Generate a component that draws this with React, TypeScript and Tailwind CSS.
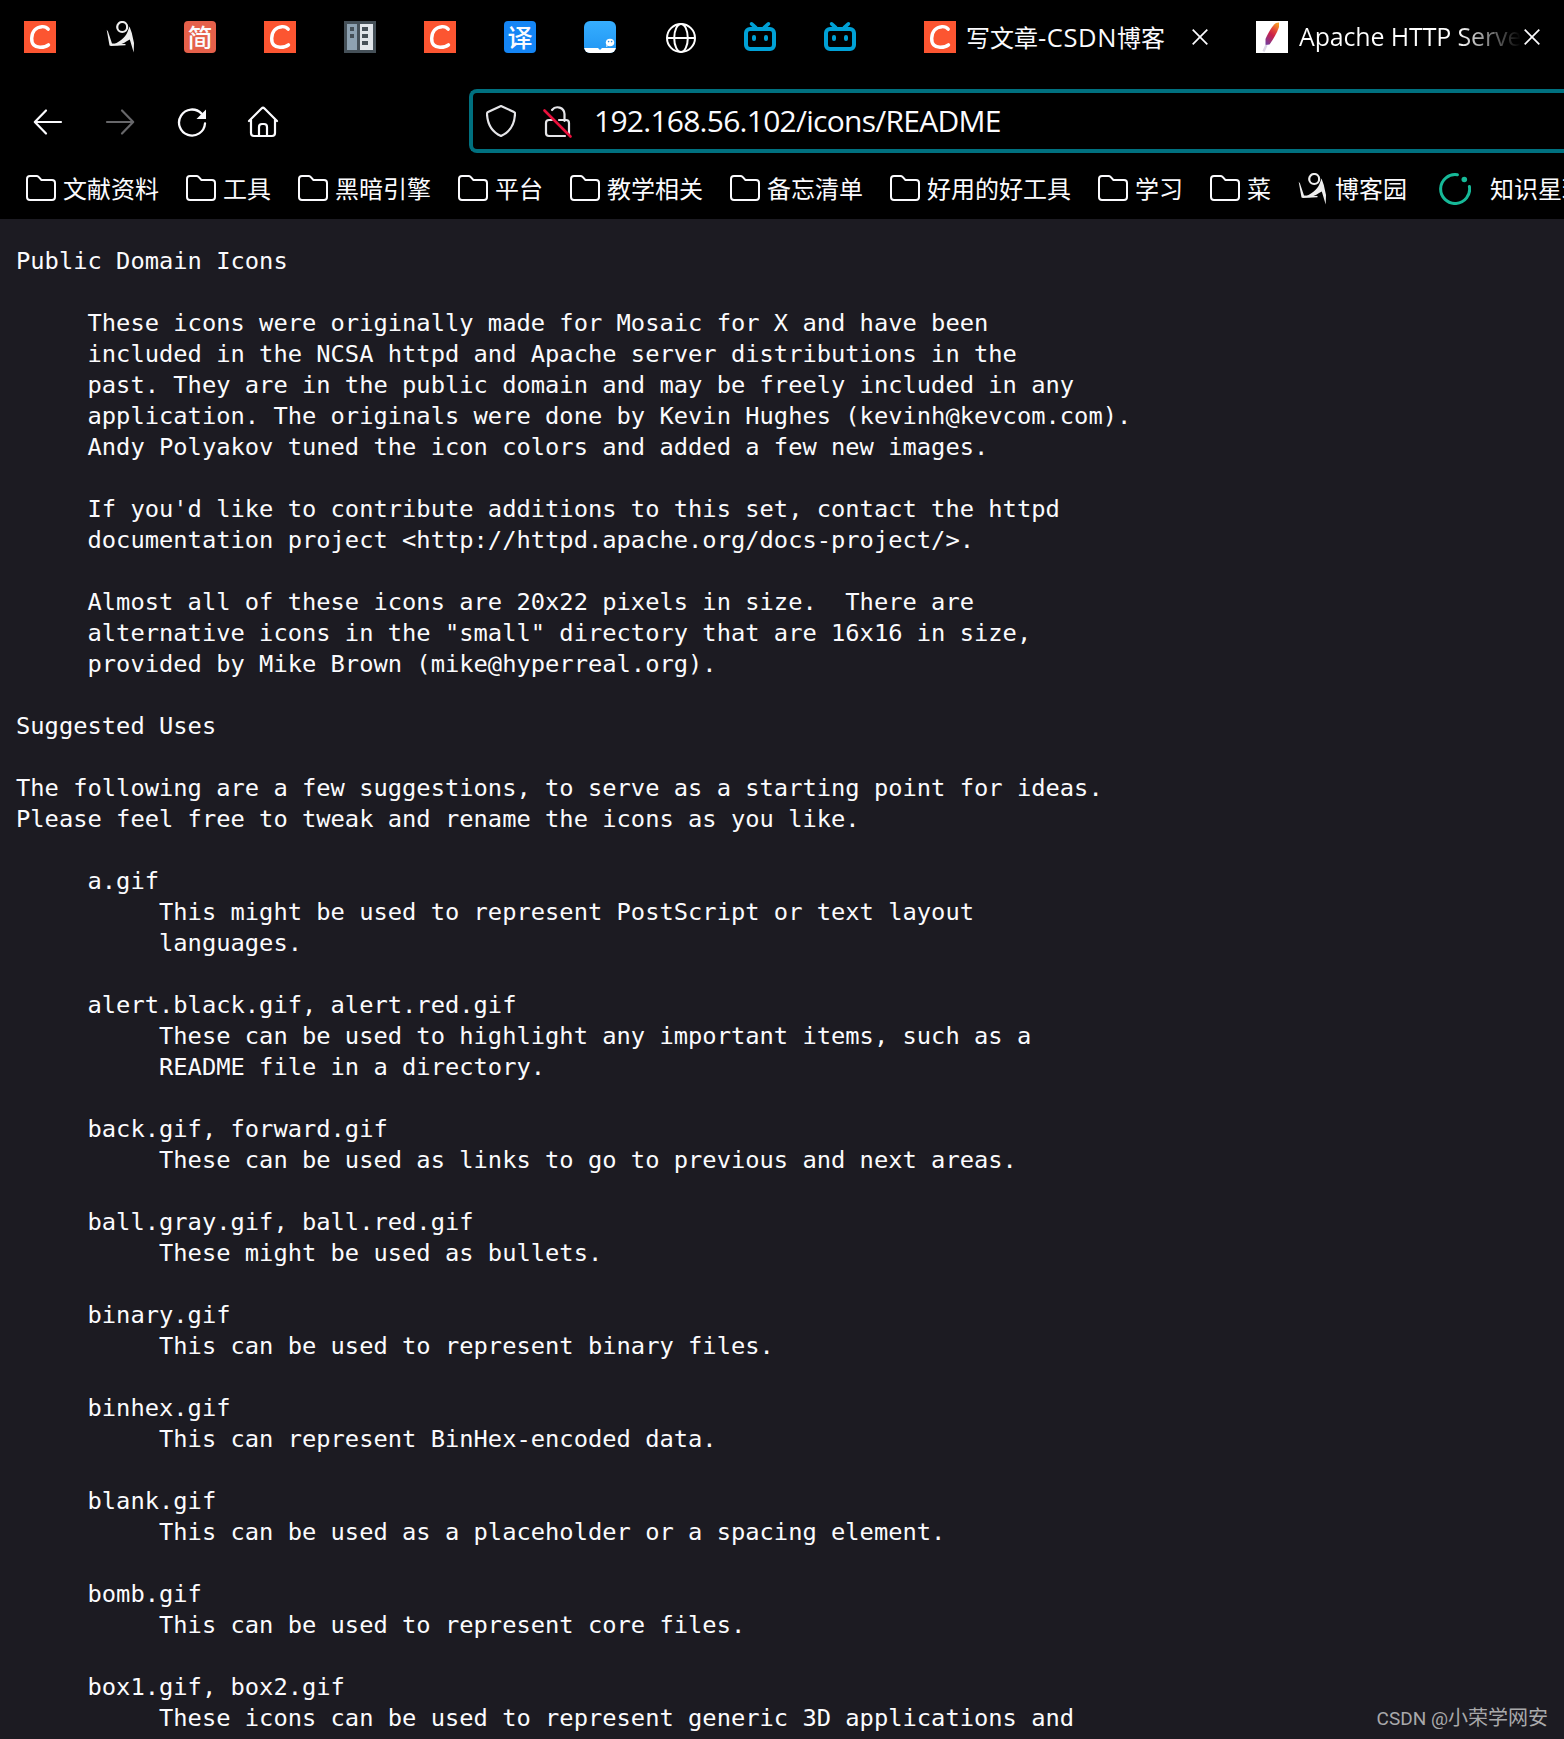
import type { ReactNode } from 'react';

const bookmarks = [
  { label: '文献资料', width: 'w-[160px]' },
  { label: '工具', width: 'w-[112px]' },
  { label: '黑暗引擎', width: 'w-[160px]' },
  { label: '平台', width: 'w-[112px]' },
  { label: '教学相关', width: 'w-[160px]' },
  { label: '备忘清单', width: 'w-[160px]' },
  { label: '好用的好工具', width: 'w-[208px]' },
  { label: '学习', width: 'w-[112px]' },
  { label: '菜', width: 'w-[88px]' },
];

const readme = `Public Domain Icons

     These icons were originally made for Mosaic for X and have been
     included in the NCSA httpd and Apache server distributions in the
     past. They are in the public domain and may be freely included in any
     application. The originals were done by Kevin Hughes (kevinh@kevcom.com).
     Andy Polyakov tuned the icon colors and added a few new images.

     If you'd like to contribute additions to this set, contact the httpd
     documentation project <http://httpd.apache.org/docs-project/>.

     Almost all of these icons are 20x22 pixels in size.  There are
     alternative icons in the "small" directory that are 16x16 in size,
     provided by Mike Brown (mike@hyperreal.org).

Suggested Uses

The following are a few suggestions, to serve as a starting point for ideas.
Please feel free to tweak and rename the icons as you like.

     a.gif
          This might be used to represent PostScript or text layout
          languages.

     alert.black.gif, alert.red.gif
          These can be used to highlight any important items, such as a
          README file in a directory.

     back.gif, forward.gif
          These can be used as links to go to previous and next areas.

     ball.gray.gif, ball.red.gif
          These might be used as bullets.

     binary.gif
          This can be used to represent binary files.

     binhex.gif
          This can represent BinHex-encoded data.

     blank.gif
          This can be used as a placeholder or a spacing element.

     bomb.gif
          This can be used to represent core files.

     box1.gif, box2.gif
          These icons can be used to represent generic 3D applications and`;

const CsdnIcon = () => (
  <svg width="32" height="32" viewBox="0 0 32 32" className="shrink-0">
    <rect width="32" height="32" fill="#fc5531" />
    <path d="M24.2 8.1C22.6 6.2 20.3 5.5 17.9 5.7C11.8 6.1 7.9 10.7 7.7 17.2C7.5 23.3 10.8 26.2 16 26.3C19.5 26.4 22.4 25.7 24.5 23.9" fill="none" stroke="#fff" strokeWidth="3.4" strokeLinecap="round" />
  </svg>
);

const CnblogsIcon = () => (
  <svg width="32" height="32" viewBox="0 0 32 32" className="shrink-0">
    <circle cx="18.2" cy="6" r="5" fill="none" stroke="#eee" strokeWidth="2.2" />
    <path d="M2.7 8.8L4 10.5L8 22.6L21.5 22.9L21.5 24.2L7 25L5.5 24.6Z" fill="#eee" />
    <path d="M25.5 5.5L27.8 12L30 22L29.7 31.5L25.8 18.5C22 20.5 19 23 14 24.2L8 24C15 21.5 21 17 23.5 11Z" fill="#eee" />
  </svg>
);

const JianIcon = () => (
  <span className="flex h-8 w-8 shrink-0 items-center justify-center rounded bg-[#e5604a] pb-px text-[25px] font-medium leading-8">简</span>
);

const BuildingIcon = () => (
  <svg width="32" height="32" viewBox="0 0 32 32" className="shrink-0">
    <rect width="32" height="32" fill="#455058" />
    <rect x="3" y="3" width="10" height="26" fill="#8ea2b2" />
    <rect x="16" y="3" width="13" height="26" fill="#e1e6eb" />
    <path d="M6 6h4v4H6zM6 13h4v4H6zM18 6h6v4h-6zM18 13h6v4h-6zM18 20h6v4h-6z" fill="#455058" />
  </svg>
);

const TranslateIcon = () => (
  <span className="flex h-8 w-8 shrink-0 items-center justify-center rounded bg-[#1485f5] pb-px text-[25px] font-medium leading-8">译</span>
);

const BlueCardIcon = () => (
  <svg width="32" height="32" viewBox="0 0 32 32" className="shrink-0">
    <defs>
      <clipPath id="card">
        <rect width="32" height="32" rx="6" />
      </clipPath>
      <linearGradient id="cardFill" x1="0" y1="0" x2="0" y2="1">
        <stop offset="0" stopColor="#36aeff" />
        <stop offset="1" stopColor="#2196f3" />
      </linearGradient>
    </defs>
    <g clipPath="url(#card)">
      <rect width="32" height="32" fill="url(#cardFill)" />
      <path d="M0 27h14l2 2 2-2h14v5H0z" fill="#fff" />
      <ellipse cx="26" cy="21.5" rx="4.2" ry="3.8" fill="#fff" />
      <circle cx="22.8" cy="25" r="0.8" fill="#fff" />
      <circle cx="24.6" cy="20.6" r="0.8" fill="#2a8fe0" />
      <circle cx="27.6" cy="20.6" r="0.8" fill="#2a8fe0" />
    </g>
  </svg>
);

const GlobeIcon = () => (
  <svg width="32" height="32" viewBox="0 0 32 32" className="shrink-0" fill="none" stroke="#fff" strokeWidth="2">
    <circle cx="17" cy="17" r="14" />
    <ellipse cx="17" cy="17" rx="6.8" ry="14" />
    <path d="M3 17h28" />
  </svg>
);

const BiliIcon = () => (
  <svg width="32" height="32" viewBox="0 0 32 32" className="shrink-0" fill="none" stroke="#00a1d6" strokeWidth="4" strokeLinecap="round">
    <rect x="2" y="8" width="28" height="20" rx="4" />
    <path d="M7.6 2.8L11.8 6.6M24.4 2.8L20.2 6.6" strokeWidth="3.6" />
    <path d="M10 16v2M22 16v2" />
  </svg>
);

const FeatherIcon = () => (
  <svg width="32" height="32" viewBox="0 0 32 32" className="shrink-0">
    <defs>
      <linearGradient id="feather" x1="0.75" y1="0" x2="0.25" y2="1">
        <stop offset="0" stopColor="#f69923" />
        <stop offset="0.3" stopColor="#e3493a" />
        <stop offset="0.55" stopColor="#cb2048" />
        <stop offset="1" stopColor="#7b3a96" />
      </linearGradient>
    </defs>
    <rect width="32" height="32" fill="#fff" />
    <path d="M20 2L23 1.500V6C21 12 17 19 13.500 23.500L9.500 24V18C12 12 16 5 20 2Z" fill="url(#feather)" />
    <path d="M10.500 24L7.500 30.500" stroke="#dcd6e6" strokeWidth="2.400" />
  </svg>
);

const FolderIcon = () => (
  <svg width="30" height="26" viewBox="0 0 30 26" className="shrink-0" fill="none" stroke="#fbfbfe" strokeWidth="2">
    <path d="M1 4a3 3 0 0 1 3-3h6.600c.8 0 1.400.3 2 .9L15.400 5H26a3 3 0 0 1 3 3v14a3 3 0 0 1-3 3H4a3 3 0 0 1-3-3z" />
  </svg>
);

const PlanetIcon = () => (
  <svg width="32" height="32" viewBox="0 0 32 32" className="mt-[2px] shrink-0">
    <path d="M18.400 1.700A14.500 14.500 0 1 0 30.400 13.400" fill="none" stroke="#16b998" strokeWidth="3" strokeLinecap="round" />
    <circle cx="25.300" cy="6.500" r="2.800" fill="#16b998" />
  </svg>
);

const CloseIcon = () => (
  <svg width="16" height="16" viewBox="0 0 16 16" className="block shrink-0" stroke="#fbfbfe" strokeWidth="1.700">
    <path d="M.7.7l14.600 14.600M15.300.7L.7 15.300" />
  </svg>
);

const PinnedTab = ({ children }: { children: ReactNode }) => (
  <div className="flex h-8 w-20 shrink-0 items-center">{children}</div>
);

const TabStrip = () => (
  <div className="flex h-[74px] items-start pl-6 pt-[21px]">
    <PinnedTab><CsdnIcon /></PinnedTab>
    <PinnedTab><CnblogsIcon /></PinnedTab>
    <PinnedTab><JianIcon /></PinnedTab>
    <PinnedTab><CsdnIcon /></PinnedTab>
    <PinnedTab><BuildingIcon /></PinnedTab>
    <PinnedTab><CsdnIcon /></PinnedTab>
    <PinnedTab><TranslateIcon /></PinnedTab>
    <PinnedTab><BlueCardIcon /></PinnedTab>
    <PinnedTab><GlobeIcon /></PinnedTab>
    <PinnedTab><BiliIcon /></PinnedTab>
    <PinnedTab><BiliIcon /></PinnedTab>
    <div className="ml-5 flex h-8 w-[332px] shrink-0 items-center">
      <CsdnIcon />
      <span className="ml-[10px] w-[226px] whitespace-nowrap text-[24px] leading-8">
        写文章<span className="text-[25.5px] tracking-[0.6px]">-CSDN</span>博客
      </span>
      <CloseIcon />
    </div>
    <div className="flex h-8 shrink-0 items-center">
      <FeatherIcon />
      <span className="mb-[2px] ml-[11px] w-[222px] overflow-hidden whitespace-nowrap bg-linear-to-r from-white from-72% to-transparent to-100% bg-clip-text text-[25px] leading-8 tracking-[-0.15px] text-transparent">Apache HTTP Server</span>
      <span className="ml-[3px]"><CloseIcon /></span>
    </div>
  </div>
);

const NavBar = () => (
  <div className="flex h-[94px] items-start">
    <div className="flex w-[469px] shrink-0 items-center pl-[33px] pt-[31px]">
      <svg width="30" height="34" viewBox="0 0 30 34" fill="none" stroke="#fbfbfe" strokeWidth="2.200" strokeLinecap="round" strokeLinejoin="round">
        <path d="M28 17H2M13 5.500L1.800 17L13 28.500" />
      </svg>
      <svg width="30" height="34" viewBox="0 0 30 34" className="ml-[42px]" fill="none" stroke="#67676a" strokeWidth="2.200" strokeLinecap="round" strokeLinejoin="round">
        <path d="M2 17h26M17 5.500L28.200 17L17 28.500" />
      </svg>
      <svg width="30" height="34" viewBox="0 0 30 34" className="ml-[42px]" fill="none" stroke="#fbfbfe" strokeWidth="2.300" strokeLinecap="round">
        <path d="M24.500 8.600A13 13 0 1 0 28 18.500" />
        <path d="M29 4.500V14h-9.500z" fill="#fbfbfe" stroke="none" />
      </svg>
      <svg width="32" height="34" viewBox="0 0 32 34" className="ml-[40px]" fill="none" stroke="#fbfbfe" strokeWidth="2.200" strokeLinecap="round" strokeLinejoin="round">
        <path d="M2 16L14.500 3.500q1.500-1.500 3 0L30 16M4 15v13q0 3 3 3h18q3 0 3-3V15" />
        <path d="M12 31v-9q0-3 3-3h2q3 0 3 3v9" />
      </svg>
    </div>
    <div className="mt-[15px] flex h-16 flex-1 items-center rounded-l-lg border-4 border-r-0 border-[#00707f] pl-[13px]">
      <svg width="30" height="34" viewBox="0 0 30 34" fill="none" stroke="#e5e5e8" strokeWidth="2.200" strokeLinejoin="round">
        <path d="M15 2L28 8q1.200.5 1 2C28.500 20 24 28 15 32C6 28 1.500 20 1 10q0-1.500 1-2z" />
      </svg>
      <svg width="30" height="34" viewBox="0 0 30 34" className="ml-[27px]" fill="none" stroke="#e5e5e8" strokeWidth="2.200" strokeLinecap="round">
        <path d="M9 6a7 7 0 0 1 12.500 4v7M16 16h7q3 0 3 3v11M22 32H6q-3 0-3-3V19q0-3 3-3h3" />
        <path d="M1.500 6.500l26 26" stroke="#e8103c" strokeWidth="2.600" />
      </svg>
      <span className="ml-[21px] whitespace-nowrap text-[30px] leading-10 tracking-[-0.74px]">192.168.56.102/icons/README</span>
    </div>
  </div>
);

const BookmarkBar = () => (
  <div className="flex h-[51px] items-center overflow-hidden pb-[11px] pl-[26px] text-[24px]">
    {bookmarks.map((item) => (
      <div key={item.label} className={`flex shrink-0 items-center ${item.width}`}>
        <FolderIcon />
        <span className="ml-[7px] mt-[2px] whitespace-nowrap leading-8">{item.label}</span>
      </div>
    ))}
    <div className="-ml-[2px] mt-[2px] flex w-[143px] shrink-0 items-center">
      <CnblogsIcon />
      <span className="ml-[7px] whitespace-nowrap leading-8">博客园</span>
    </div>
    <PlanetIcon />
    <span className="ml-[19px] mt-[2px] whitespace-nowrap leading-8">知识星球</span>
  </div>
);

const App = () => {
  return (
    <div className="relative flex h-[1739px] w-[1564px] flex-col overflow-hidden bg-[#1c1b22] text-[#fbfbfe]">
      <header className="shrink-0 bg-black font-['Open_Sans','Noto_Sans_CJK_SC',sans-serif]">
        <TabStrip />
        <NavBar />
        <BookmarkBar />
      </header>
      <pre className="pl-[16px] pt-[27px] font-['DejaVu_Sans_Mono',monospace] text-[23.75px] leading-[31px]">{readme}</pre>
      <div className="absolute bottom-1 right-4 font-['Roboto','Noto_Sans_CJK_SC',sans-serif] text-[20px] leading-8 text-[#a9a9ab]">
        <span className="text-[19px]">CSDN @</span>小荣学网安
      </div>
    </div>
  );
};

export default App;
